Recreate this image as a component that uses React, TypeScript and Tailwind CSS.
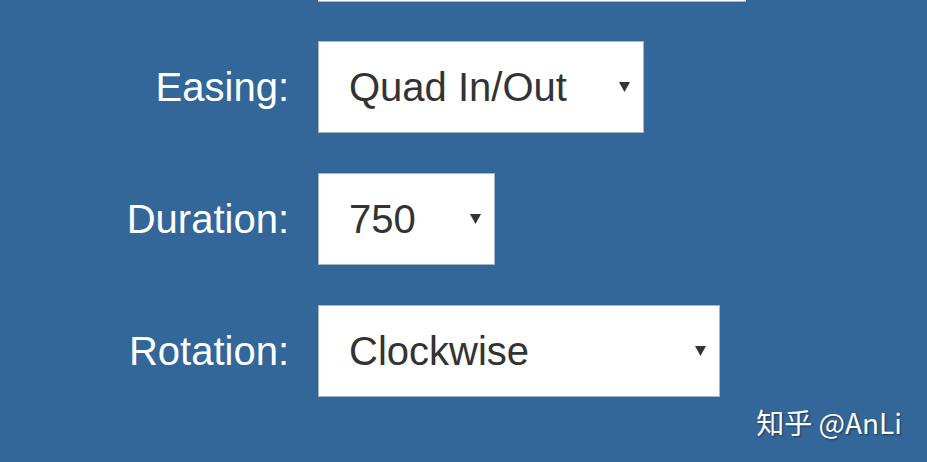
import React from "react"

type Row = { label: string; value: string; width: string }

const rows: Row[] = [
    { label: "Easing:", value: "Quad In/Out", width: "w-[326px]" },
    { label: "Duration:", value: "750", width: "w-[177px]" },
    { label: "Rotation:", value: "Clockwise", width: "w-[402px]" },
]

function Caret() {
    return (
        <svg width="11" height="10" viewBox="0 0 11 10" aria-hidden>
            <path d="M0 0 H11 L5.5 10 Z" fill="#333333" />
        </svg>
    )
}

function FakeSelect({ value, width }: { value: string; width: string }) {
    return (
        <div
            className={[
                width,
                "h-[92px] flex items-center justify-between bg-white border border-[#a7b6c6]",
                "pl-[30px] pr-[13px] text-[40px] text-[#333333]",
            ].join(" ")}
        >
            <span className="leading-none">{value}</span>
            <Caret />
        </div>
    )
}

export default function App() {
    return (
        <div
            className="relative w-[927px] h-[462px] overflow-hidden bg-[#336699]"
            style={{ fontFamily: '"Liberation Sans", Arial, sans-serif' }}
        >
            {/* tail of the select above, cut off by the window */}
            <div className="flex mb-[39px]">
                <div className="w-[288px]" />
                <div className="ml-[30px] w-[428px] h-[2px] bg-white border-b border-[#a7b6c6]" />
            </div>
            <div className="flex flex-col gap-[40px]">
                {rows.map((r) => (
                    <div key={r.label} className="flex items-center">
                        <label className="w-[289px] text-right text-[40px] text-white leading-none">
                            {r.label}
                        </label>
                        <div className="ml-[29px]">
                            <FakeSelect value={r.value} width={r.width} />
                        </div>
                    </div>
                ))}
            </div>

            <div
                className="absolute right-[25px] bottom-[26px] text-[28px] text-white leading-none [text-shadow:1px_1px_2px_rgba(0,0,0,0.45)]"
                style={{ fontFamily: '"Noto Sans CJK SC", "Liberation Sans", sans-serif' }}
            >
                知乎 @AnLi
            </div>
        </div>
    )
}
